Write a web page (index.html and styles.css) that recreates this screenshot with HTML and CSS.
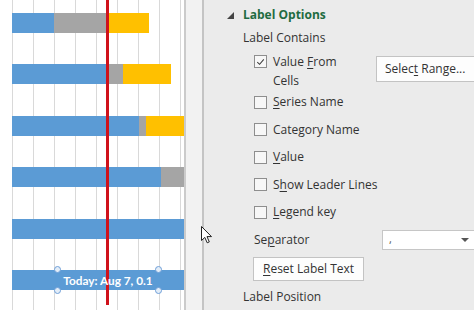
FILE: index.html
```html
<!DOCTYPE html>
<html>
<head>
<meta charset="utf-8">
<link rel="stylesheet" href="styles.css">
</head>
<body>
<div class="app">
  <div class="chart">
    <div class="bars">
      <div class="row"><span class="seg blue" style="width:42px"></span><span class="seg gray" style="width:52px"></span><span class="seg yellow" style="width:43px"></span></div>
      <div class="row"><span class="seg blue" style="width:94px"></span><span class="seg gray" style="width:17px"></span><span class="seg yellow" style="width:48px"></span></div>
      <div class="row"><span class="seg blue" style="width:127px"></span><span class="seg gray" style="width:7px"></span><span class="seg yellow" style="width:40px"></span></div>
      <div class="row"><span class="seg blue" style="width:149px"></span><span class="seg gray" style="width:30px"></span></div>
      <div class="row"><span class="seg blue" style="width:180px"></span></div>
      <div class="row"><span class="seg blue" style="width:180px"></span></div>
    </div>
    <div class="today-line"></div>
    <div class="data-label">
      <span class="label-text">Today: Aug 7, 0.1</span>
      <span class="handle tl"></span><span class="handle tr"></span>
      <span class="handle bl"></span><span class="handle br"></span>
    </div>
  </div>
  <div class="splitter"></div>
  <div class="panel">
    <div class="section-head"><span class="tri"></span><span class="head-text">Label Options</span></div>
    <div class="group-title">Label Contains</div>
    <div class="opt opt-multi">
      <span class="box checked"><svg viewBox="0 0 12 12" width="12" height="12"><path d="M2.5 6.2 L5 8.6 L9.6 3.2" fill="none" stroke="#3a3a3a" stroke-width="1.1"/></svg></span>
      <span class="opt-text">Value <u>F</u>rom<br>Cells</span>
      <span class="btn range-btn"><span>Selec<u>t</u> Range...</span></span>
    </div>
    <div class="opt"><span class="box"></span><span class="opt-text"><u>S</u>eries Name</span></div>
    <div class="opt"><span class="box"></span><span class="opt-text">Cate<u>g</u>ory Name</span></div>
    <div class="opt"><span class="box"></span><span class="opt-text"><u>V</u>alue</span></div>
    <div class="opt"><span class="box"></span><span class="opt-text">S<u>h</u>ow Leader Lines</span></div>
    <div class="opt"><span class="box"></span><span class="opt-text"><u>L</u>egend key</span></div>
    <div class="sep-row">
      <span class="sep-label">Se<u>p</u>arator</span>
      <span class="dropdown"><span class="dd-value">,</span><span class="dd-arrow"></span></span>
    </div>
    <div class="reset-row"><span class="btn reset-btn"><span><u>R</u>eset Label Text</span></span></div>
    <div class="group-title pos-title">Label Position</div>
  </div>
  <svg class="cursor" width="12" height="18" viewBox="0 0 12 18"><path d="M0.5 0.5 L0.5 14.5 L3.8 11.4 L6.2 16.8 L8.3 15.9 L6 10.6 L10.5 10.6 Z" fill="#fff" stroke="#222" stroke-width="1" stroke-linejoin="round"/></svg>
</div>
</body>
</html>
```

FILE: styles.css
```css
html, body {
  margin: 0;
  padding: 0;
}
body {
  width: 474px;
  height: 310px;
  overflow: hidden;
  font-family: "Open Sans", "Noto Sans", sans-serif;
}
.app {
  position: relative;
  display: flex;
  width: 474px;
  height: 310px;
  overflow: hidden;
}
.chart {
  position: relative;
  width: 184px;
  flex: none;
  height: 310px;
  overflow: hidden;
  background-color: #ffffff;
  background-image: repeating-linear-gradient(to right, #d9d9d9 0, #d9d9d9 1px, transparent 1px, transparent 21px);
  background-position: 12px 0;
}
.bars {
  display: flex;
  flex-direction: column;
  gap: 31.4px;
  padding: 13px 0 0 12px;
}
.row {
  display: flex;
  height: 20px;
}
.seg {
  flex: none;
  height: 20px;
}
.blue { background: #5b9bd5; }
.gray { background: #a5a5a5; }
.yellow { background: #ffc000; }
.today-line {
  position: absolute;
  left: 106px;
  top: 0;
  width: 3px;
  height: 305px;
  background: #d0121b;
}
.data-label {
  position: absolute;
  left: 58px;
  top: 270px;
  width: 100px;
  height: 20px;
  display: flex;
  align-items: center;
  justify-content: center;
  color: #ffffff;
  font-family: "Lato", "Liberation Sans", sans-serif;
  font-weight: bold;
  font-size: 11.8px;
  white-space: nowrap;
}
.label-text {
  margin-top: 1px;
}
.handle {
  position: absolute;
  width: 5px;
  height: 5px;
  border-radius: 50%;
  background: #e3edf8;
  border: 1px solid #6f9fd8;
}
.handle.tl { left: -4px; top: -4px; }
.handle.tr { right: -4px; top: -4px; }
.handle.bl { left: -4px; bottom: -4px; }
.handle.br { right: -4px; bottom: -4px; }
.splitter {
  flex: none;
  width: 16px;
  height: 310px;
  background: #f2f2f2;
  border-left: 2px solid #cbcbcb;
  border-right: 2px solid #c4c4c4;
}
.panel {
  flex: 1;
  height: 310px;
  overflow: hidden;
  background: #ebebeb;
  color: #333333;
  font-size: 12px;
  line-height: 18px;
}
.section-head {
  display: flex;
  align-items: center;
  margin-top: 6px;
  padding-left: 23px;
  height: 18px;
}
.tri {
  width: 0;
  height: 0;
  border-left: 7px solid transparent;
  border-bottom: 7px solid #444444;
  margin-right: 9px;
  margin-top: 1px;
}
.head-text {
  color: #1f6b41;
  font-weight: bold;
  font-size: 12px;
}
.group-title {
  margin-top: 5px;
  padding-left: 39px;
  height: 18px;
}
.opt {
  display: flex;
  align-items: center;
  height: 27.5px;
  padding-left: 50px;
}
.opt-multi {
  align-items: flex-start;
  height: auto;
  margin-top: 5px;
  padding-bottom: 0;
}
.opt-multi .box {
  margin-top: 3px;
}
.opt-multi .opt-text {
  line-height: 19px;
  margin-top: -0.5px;
  height: 37px;
}
.box {
  flex: none;
  width: 11px;
  height: 11px;
  border: 1px solid #8e8e8e;
  background: #f7f7f7;
  margin-right: 6px;
  display: flex;
  align-items: center;
  justify-content: center;
}
.box svg {
  display: block;
}
.opt-text {
  white-space: nowrap;
}
u {
  text-decoration-thickness: 1px;
  text-underline-offset: 2px;
}
.btn {
  background: #fdfdfd;
  border: 1px solid #c3c3c3;
  display: flex;
  align-items: center;
  white-space: nowrap;
  box-sizing: border-box;
}
.range-btn {
  margin-left: auto;
  margin-top: 4px;
  height: 26px;
  width: 100px;
  margin-right: -2px;
  padding-left: 8px;
}
.sep-row {
  display: flex;
  align-items: center;
  margin-top: 4px;
  height: 20px;
  padding-left: 50px;
}
.dropdown {
  margin-left: auto;
  margin-right: -4px;
  width: 96px;
  height: 20px;
  box-sizing: border-box;
  background: #ffffff;
  border: 1px solid #c6c6c6;
  display: flex;
  align-items: center;
}
.dd-value {
  margin-left: 6px;
  font-size: 11px;
  color: #555;
  margin-top: -2px;
}
.dd-arrow {
  margin-left: auto;
  margin-right: 8px;
  width: 0;
  height: 0;
  border-left: 4px solid transparent;
  border-right: 4px solid transparent;
  border-top: 4px solid #555555;
}
.reset-row {
  display: flex;
  margin-top: 7px;
  padding-left: 49px;
}
.reset-btn {
  height: 24px;
  padding: 0 9px;
}
.pos-title {
  margin-top: 7px;
}
.cursor {
  position: absolute;
  left: 201px;
  top: 226px;
}
```
